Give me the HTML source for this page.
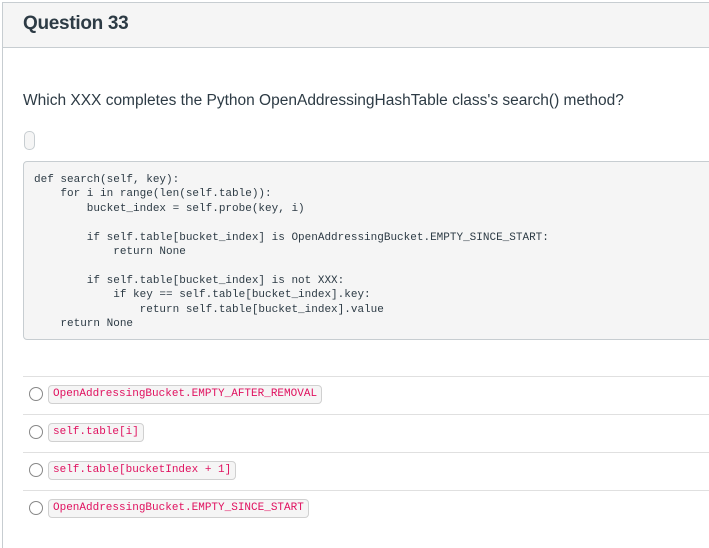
<!DOCTYPE html>
<html><head><style>
html,body{margin:0;width:709px;height:547px;overflow:hidden;background:#fff;font-family:"Liberation Sans",sans-serif;color:#2d3b45}
.wrap{position:absolute;left:2px;top:2px;width:706px;height:545px;border:1px solid #c7cdd1;border-right:none;border-bottom:none;overflow:hidden}
.hdr{height:44px;background:#f5f5f5;border-bottom:1px solid #c7cdd1;}
.hdr h2{margin:0;position:absolute;left:20px;top:10px;font-size:19px;font-weight:bold;color:#2d3b45;letter-spacing:-0.3px}
.q{position:absolute;left:20px;top:89px;font-size:15.5px;color:#2d3b45;white-space:nowrap}
.pill{position:absolute;left:21px;top:128px;width:9px;height:17px;border:1px solid #c7cdd1;border-radius:5px;background:#f5f5f5}
pre{position:absolute;left:20px;top:158px;width:700px;margin:0;padding:11px 10px 8px;box-sizing:border-box;height:179px;background:#f5f5f5;border:1px solid #c7cdd1;border-radius:4px;font-family:"Liberation Mono",monospace;font-size:11px;line-height:14.4px;color:#2d3b45}
.opt{position:absolute;left:20px;width:700px;border-top:1px solid #e0e0e0;height:37px}
.r{position:absolute;left:6px;top:10px;width:12px;height:12px;border:1px solid #888;border-radius:50%}
.c{position:absolute;left:25px;top:8px;padding:1px 4px;border:1px solid #d0d0d0;border-radius:4px;background:#f5f5f5;font-family:"Liberation Mono",monospace;font-size:11px;color:#e0115f;line-height:15px;white-space:nowrap}
</style></head><body>
<div class="wrap">
<div class="hdr"><h2>Question 33</h2></div>
<div class="q">Which XXX completes the Python OpenAddressingHashTable class's search() method?</div>
<div class="pill"></div>
<pre>def search(self, key):
    for i in range(len(self.table)):
        bucket_index = self.probe(key, i)

        if self.table[bucket_index] is OpenAddressingBucket.EMPTY_SINCE_START:
            return None

        if self.table[bucket_index] is not XXX:
            if key == self.table[bucket_index].key:
                return self.table[bucket_index].value
    return None</pre>
<div class="opt" style="top:373px"><div class="r"></div><div class="c">OpenAddressingBucket.EMPTY_AFTER_REMOVAL</div></div>
<div class="opt" style="top:411px"><div class="r"></div><div class="c">self.table[i]</div></div>
<div class="opt" style="top:449px"><div class="r"></div><div class="c">self.table[bucketIndex + 1]</div></div>
<div class="opt" style="top:487px"><div class="r"></div><div class="c">OpenAddressingBucket.EMPTY_SINCE_START</div></div>
</div>
</body></html>
